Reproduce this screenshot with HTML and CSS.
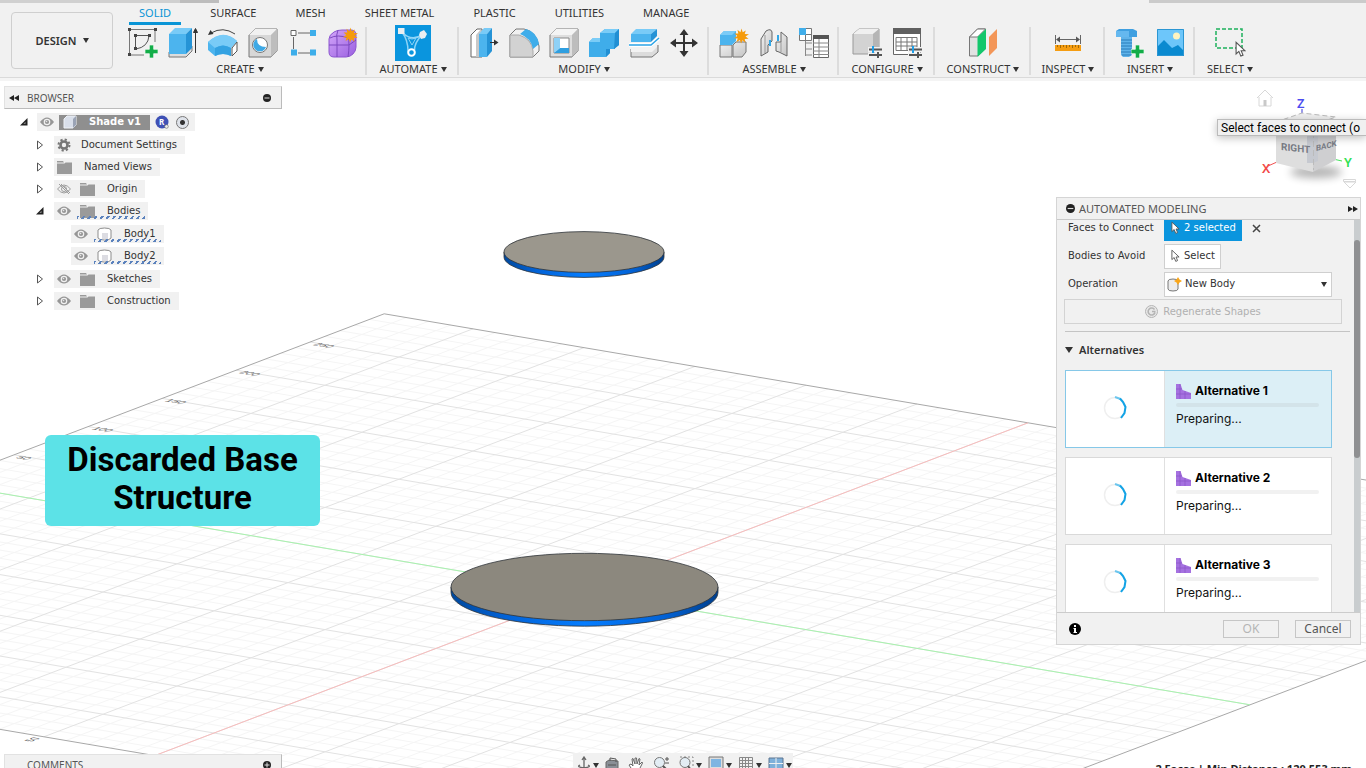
FILE: index.html
```html
<!DOCTYPE html>
<html lang="en">
<head>
<meta charset="utf-8">
<title>Shade v1</title>
<link rel="stylesheet" href="styles.css">
</head>
<body>
<svg class="defs" aria-hidden="true">
  <defs>
    <linearGradient id="steel" x1="0" y1="0" x2="1" y2="1"><stop offset="0" stop-color="#f4f4f4"/><stop offset="1" stop-color="#c4c4c4"/></linearGradient>
    <linearGradient id="rim"><stop offset="0" stop-color="#00489c"/><stop offset=".2" stop-color="#0262d6"/><stop offset=".5" stop-color="#057dff"/><stop offset=".8" stop-color="#0262d6"/><stop offset="1" stop-color="#003f8c"/></linearGradient>
    <linearGradient id="violet" x1="0" y1="0" x2="1" y2="1"><stop offset="0" stop-color="#d3a6fa"/><stop offset="1" stop-color="#9a5fe0"/></linearGradient>
    <symbol id="plus" viewBox="0 0 12 12"><path d="M4 0h4v4h4v4H8v4H4V8H0V4h4z" fill="#12ad48" stroke="#fff" stroke-width=".6"/></symbol>
    <symbol id="star" viewBox="0 0 16 16"><path d="M8 0l1.300 4.100L12.600 2l-1.200 3.800L16 6.200 12.300 8.600 15.500 11l-4.100.100.900 4L9 12.400 7.500 16 6.300 12.200 2.700 14.500 4 10.700 0 10.300 3.500 8 .600 5.200 4.600 5.200 3.700 1.300 6.900 3.900z" fill="#f59b0b"/></symbol>
    <symbol id="eye" viewBox="0 0 14 10"><path d="M0 5Q7-4 14 5Q7 14 0 5z" fill="#969696"/><circle cx="7" cy="5" r="3.300" fill="#f1f1f1"/><circle cx="7" cy="5" r="2.100" fill="#969696"/><circle cx="6.500" cy="4.500" r=".8" fill="#e4e4e4"/></symbol>
    <symbol id="eye-off" viewBox="0 0 14 10"><path d="M.5 5Q7-3 13.500 5Q7 13 .5 5zM2 0l10 10M4 0l9 9" fill="none" stroke="#9d9d9d"/><circle cx="7" cy="5" r="2.500" fill="none" stroke="#9d9d9d"/></symbol>
    <symbol id="folder" viewBox="0 0 15 13"><path d="M0 0h6l1 1.500H0zM0 2.500h7.500l1-1H15V13H0z" fill="#9a9a9a"/></symbol>
    <symbol id="body" viewBox="0 0 15 14"><path d="M1 3Q2 1 7.500 1T14 3v8q-1 2-6.500 2T1 11z" fill="#fff" stroke="#8d8d8d"/><path d="M5 6h6v6H5z" fill="#dcdce2"/></symbol>
    <symbol id="open" viewBox="0 0 8 8"><path d="M7.500 0v7.500H0z" fill="#222"/><path d="M5.500 4v1.800H3.500z" fill="#aaa"/></symbol>
    <symbol id="shut" viewBox="0 0 8 10"><path d="M1.500 1L6.500 5 1.500 9z" fill="#fff" stroke="#555"/></symbol>
    <symbol id="cursor" viewBox="0 0 10 15"><path d="M1 1v10.500l2.500-2.300L5.300 13.500l2-.9L5.600 8.600H9z" fill="#fff" stroke="#555"/></symbol>
    <symbol id="down" viewBox="0 0 6 5"><path d="M0 0h6L3 5z" fill="#333"/></symbol>
    <symbol id="shape" viewBox="0 0 15 15"><path d="M0 0h4.500l2 6 8.500 3v6H0z" fill="#a571e0"/><path d="M0 5h6M0 10h15M4 0v15M9 7v8" stroke="#8a55c6" stroke-width=".7"/></symbol>
    <symbol id="spinner" viewBox="0 0 24 26"><circle cx="12" cy="13" r="10.500" fill="none" stroke="#efefef" stroke-width="1.500"/><path d="M12 2l5.500 2" stroke="#6cc6ee" stroke-width="2" fill="none"/><path d="M17 3.500l3 3.500 2.500 5-1 6-3.500 5" stroke="#12a3e6" stroke-width="2" fill="none"/></symbol>
  </defs>
</svg>

<div class="app">
  <svg class="canvas" viewBox="0 0 1366 778" preserveAspectRatio="xMinYMin slice" aria-label="Model view">
    <g id="grid"></g>
    <g class="ruler">
      <text transform="matrix(.97 .17 -.8 .3 312 345)">250</text>
      <text transform="matrix(.97 .17 -.8 .3 238 373)">200</text>
      <text transform="matrix(.97 .17 -.8 .3 164 401)">150</text>
      <text transform="matrix(.97 .17 -.8 .3 91 429)">100</text>
      <text transform="matrix(.97 .17 -.8 .3 15 458)">50</text>
      <text transform="matrix(.8 -.3 .97 .17 31 742)">50</text>
    </g>
    <g stroke="#2f3338" stroke-width=".8">
      <path d="M504 252v5a80 20.400 0 0 0 160 0v-5z" fill="url(#rim)"/>
      <ellipse cx="584" cy="252" rx="80" ry="20.400" fill="#9b978d"/>
      <path d="M451 587v5.500a133.500 33.700 0 0 0 267 0V587z" fill="url(#rim)"/>
      <ellipse cx="584.500" cy="587" rx="133.500" ry="33.700" fill="#8c887e"/>
    </g>
  </svg>

  <header class="ribbon">
    <div class="strip"><i class="strip-a"></i><i class="strip-b"></i><i class="strip-c"></i><i class="strip-d"></i></div>
    <button class="design" type="button">DESIGN <svg width="6" height="5"><use href="#down"/></svg></button>
    <div class="tools">
      <nav class="tabs">
        <button type="button" class="tab active">SOLID</button>
        <button type="button" class="tab">SURFACE</button>
        <button type="button" class="tab">MESH</button>
        <button type="button" class="tab">SHEET METAL</button>
        <button type="button" class="tab">PLASTIC</button>
        <button type="button" class="tab">UTILITIES</button>
        <button type="button" class="tab">MANAGE</button>
      </nav>
      <div class="groups">
        <section class="group create">
          <div class="icons">
            <button type="button" aria-label="Sketch"><svg viewBox="0 0 32 32"><path d="M4 2.500h23M2.500 4v23M28 4v11M4 28h13" stroke="#777" fill="none"/><path d="M10 8.500h11M8.500 10v11M22 9q-1 11-13 13" stroke="#555" fill="none"/><path d="M1 1h3v3H1zM27 1h3v3h-3zM1 26h3v3H1zM7 7h3v3H7zM21 7h3v3h-3zM7 20h3v3H7z" fill="#444"/><use href="#plus" x="18" y="18" width="13" height="13"/></svg></button>
            <button type="button" aria-label="Extrude"><svg viewBox="0 0 32 32"><path d="M2 25v5h17l6-6v-5z" fill="#ddd" stroke="#777"/><path d="M2 7h17v20H2z" fill="#4cb4ee"/><path d="M2 7l6-6h17l-6 6z" fill="#79cbf7"/><path d="M19 7l6-6v20l-6 6z" fill="#2593d6"/><path d="M28.500 26V4M26.500 5.500l2-4 2 4z" stroke="#333" fill="#333"/></svg></button>
            <button type="button" aria-label="Revolve"><svg viewBox="0 0 32 32"><path d="M1 15v8l7 6q8-4 16 0v-8l6-7Q16 2 1 15z" fill="#4cb4ee"/><path d="M1 15Q16 1 30 14l-6 7q-8-5-16 0z" fill="#79cbf7"/><path d="M8 21q8-5 16 0v8q-8-4-16 0z" fill="#33a2e2"/><path d="M25 21l5-6v9l-5 5z" fill="#fff" stroke="#555"/><path d="M4 6Q16-1 28 7" fill="none" stroke="#444"/><path d="M1 8l2.500-5 3 4z" fill="#333"/></svg></button>
            <button type="button" aria-label="Hole"><svg viewBox="0 0 32 32"><path d="M2 8l6-6h22v22l-6 6H2z" fill="#d7d7d7" stroke="#777"/><path d="M2 8l6-6h22l-6 6z" fill="#f1f1f1"/><path d="M24 8l6-6v22l-6 6z" fill="#bdbdbd"/><circle cx="13" cy="18" r="7.500" fill="#fff" stroke="#777"/><path d="M10 12q0 8 9 8a6.500 6.500 0 1 1-9-8z" fill="#3fa9e5"/></svg></button>
            <button type="button" aria-label="Pattern"><svg viewBox="0 0 32 32"><path d="M11 6h12M6.500 10v12M11 26h12" stroke="#666"/><path d="M4 3.500h5v5H4z" fill="#fff" stroke="#666"/><path d="M23 3h6v6h-6zM4 22.500h6v6H4zM23 22.500h6v6h-6z" fill="#3daeea"/></svg></button>
            <button type="button" aria-label="Form"><svg viewBox="0 0 32 32"><path d="M2 12q0-4 5-7 3-2 8-2h9q5 0 5 5v12q0 4-3 7t-7 3H7q-5 0-5-5z" fill="url(#violet)" stroke="#8c57cf"/><path d="M11 3q-2 5-1 10v17M2 18h20l7-5M21 9q2 8 0 21M3 11q7-4 19 0l7-4" fill="none" stroke="#7c48bf"/><use href="#star" x="16" y="0" width="15" height="16"/></svg></button>
          </div>
          <button type="button" class="label">CREATE <svg width="6" height="5"><use href="#down"/></svg></button>
        </section>
        <section class="group automate">
          <div class="icons">
            <button type="button" class="on" aria-label="Automated Modeling"><svg viewBox="0 0 36 36"><path d="M7 7q9 10 20 3-8 8-7.500 16h-6.500q0-11-6-19z" fill="none" stroke="#8ed4f7" stroke-width="1.500"/><path d="M13 13q4 2 8 0l-4 7z" fill="none" stroke="#8ed4f7"/><path d="M3 3h6.500v6H3zM25 7l4-2 3 4-2 4-4 1-2-4z" fill="#e9eef1"/><circle cx="16.500" cy="27.500" r="3.300" fill="#0a95de" stroke="#fff" stroke-width="2"/></svg></button>
          </div>
          <button type="button" class="label">AUTOMATE <svg width="6" height="5"><use href="#down"/></svg></button>
        </section>
        <section class="group modify">
          <div class="icons">
            <button type="button" aria-label="Press Pull"><svg viewBox="0 0 32 32"><path d="M3 8l6-6h5v28H3z" fill="#fff" stroke="#666"/><path d="M8 8l5-6v28H8z" fill="#c8c8c8"/><path d="M11 7l5-6h8l-5 6z" fill="#79cbf7"/><path d="M11 7h8v23h-8z" fill="#4cb4ee"/><path d="M19 7l5-6v23l-5 6z" fill="#2593d6"/><path d="M22 15.500h6" stroke="#333"/><path d="M26 12.500l4.500 3-4.500 3z" fill="#333"/></svg></button>
            <button type="button" aria-label="Fillet"><svg viewBox="0 0 32 32"><path d="M2 8l6-6h8q12 2 15 17v5l-6 6H2z" fill="#f1f1f1" stroke="#777"/><path d="M2 8h9q13 4 14 16v6H2z" fill="#d2d2d2" stroke="#aaa"/><path d="M12 7l6-5q11 3 13 15l-6 5Q23 11 12 7z" fill="#3fadea"/></svg></button>
            <button type="button" aria-label="Shell"><svg viewBox="0 0 32 32"><path d="M2 8l6-6h22v22l-6 6H2z" fill="#dedede" stroke="#777"/><path d="M2 8l6-6h22l-6 6z" fill="#f4f4f4"/><path d="M24 8l6-6v22l-6 6z" fill="#bdbdbd"/><path d="M6 11h15v15H6z" fill="#fff" stroke="#888"/><path d="M6 11v15l6-5v-10z" fill="#8fd1f6"/><path d="M6 26l6-5h9v5z" fill="#2f9fe0"/></svg></button>
            <button type="button" aria-label="Combine"><svg viewBox="0 0 32 32"><path d="M1 15l4-4h7V6l5-4h14v16l-5 4h-4v4l-4 4H1z" fill="#3fadea"/><path d="M1 15l4-4h7V6l5-4h14l-4 4H12v9z" fill="#7accf7"/><path d="M12 6h15v16h-9v-7h-6z" fill="#3fadea"/><path d="M27 6l4-4v16l-5 4zM18 22h4v4l-4 4z" fill="#218fd3"/></svg></button>
            <button type="button" aria-label="Split"><svg viewBox="0 0 32 32"><path d="M3 22v8h21l6-5v-7" fill="#dcdcdc" stroke="#777"/><path d="M3 20h21l5-5v5l-5 5H3z" fill="#f2f2f2"/><path d="M3 7h20v8H3z" fill="#4cb4ee"/><path d="M3 7l5-5h21l-6 5z" fill="#79cbf7"/><path d="M23 7l6-5v7l-6 6z" fill="#2593d6"/><path d="M1 18h22l8-7" fill="none" stroke="#fff" stroke-width="4"/><path d="M1 18h22l8-7" fill="none" stroke="#2da4e6" stroke-width="1.500"/></svg></button>
            <button type="button" aria-label="Move"><svg viewBox="0 0 32 32"><path d="M16 5v22M5 16h22" stroke="#333" stroke-width="2"/><path d="M16 2l4.500 6h-9zM16 30l4.500-6h-9zM2 16l6-4.500v9zM30 16l-6-4.500v9z" fill="#333"/></svg></button>
          </div>
          <button type="button" class="label">MODIFY <svg width="6" height="5"><use href="#down"/></svg></button>
        </section>
        <section class="group assemble">
          <div class="icons">
            <button type="button" aria-label="New Component"><svg viewBox="0 0 32 32"><path d="M2 18h12v12H2zM15 18l3-3h10v10l-4 5H15z" fill="url(#steel)" stroke="#777"/><path d="M2 8l4-4h12v10l-4 4H2z" fill="#4cb4ee"/><path d="M2 8l4-4h12l-4 4z" fill="#7bcbf7"/><use href="#star" x="16" y="1" width="15" height="16"/></svg></button>
            <button type="button" aria-label="Joint"><svg viewBox="0 0 32 32"><path d="M3 12l5-8q5-3 6 1v9l-4 4v7l-7 4z" fill="url(#steel)" stroke="#666"/><path d="M29 10l-6-5v10h-5v9l3 1 8 4z" fill="url(#steel)" stroke="#666"/><path d="M7 8v18M23 15v10" stroke="#999"/><path d="M12 13v6M20 8v6" stroke="#32a8e8" stroke-width="2"/></svg></button>
            <button type="button" aria-label="Bill of Materials"><svg viewBox="0 0 32 32"><path d="M1.500 1.500h12v12h-12zM7.500 1.500v12M1.500 7.500h12" fill="#fff" stroke="#777"/><path d="M1 1h7v7H1z" fill="#41aeea"/><path d="M7.500 14v15M8 16h6M8 22h6M8 28h6" stroke="#888"/><path d="M15.500 9.500h15v21h-15z" fill="#fff" stroke="#666"/><path d="M15 8h16v4H15z" fill="#555"/><path d="M15 16h16M15 20h16M15 24h16M15 27.500h16M21 12v18" stroke="#888"/></svg></button>
          </div>
          <button type="button" class="label">ASSEMBLE <svg width="6" height="5"><use href="#down"/></svg></button>
        </section>
        <section class="group configure">
          <div class="icons">
            <button type="button" aria-label="Configure"><svg viewBox="0 0 32 32"><path d="M2 7l6-5h20v19l-6 6H2z" fill="#d3d3d3" stroke="#999"/><path d="M2 7l6-5h20l-6 5z" fill="#f0f0f0"/><path d="M22 7l6-5v19l-6 6z" fill="#b5b5b5"/><path d="M17 22.500h15M17 28h15" stroke="#f1f1f1" stroke-width="5"/><path d="M18 22.500h13M18 28h13" stroke="#555" stroke-width="2"/><path d="M22 19v7" stroke="#209fe8" stroke-width="2"/><path d="M27 25v6" stroke="#555" stroke-width="2"/></svg></button>
            <button type="button" aria-label="Configuration Table"><svg viewBox="0 0 32 32"><path d="M2.500 2.500h27v25h-27z" fill="#fff" stroke="#666"/><path d="M2 1h28v6H2z" fill="#606060"/><path d="M5 10.500h21v13H5zM5 15h21M5 19h21M10 10v14M16 10v14M21 10v14" fill="none" stroke="#777"/><path d="M17 22.500h15M17 28h15" stroke="#f1f1f1" stroke-width="5"/><path d="M18 22.500h13M18 28h13" stroke="#555" stroke-width="2"/><path d="M22 19v7" stroke="#209fe8" stroke-width="2"/><path d="M27 25v6" stroke="#555" stroke-width="2"/></svg></button>
          </div>
          <button type="button" class="label">CONFIGURE <svg width="6" height="5"><use href="#down"/></svg></button>
        </section>
        <section class="group construct">
          <div class="icons">
            <button type="button" aria-label="Offset Plane"><svg viewBox="0 0 32 32"><path d="M2.500 10l8-8h8v19l-8 8h-8z" fill="#e2e2e2" stroke="#777"/><path d="M2.500 10l8-8h8l-8 8z" fill="#fff" stroke="#777"/><path d="M10.500 10l8.500-8v20l-8.500 8z" fill="#14c76c"/><path d="M22 10l8-8v19l-8 8z" fill="#f39658"/></svg></button>
          </div>
          <button type="button" class="label">CONSTRUCT <svg width="6" height="5"><use href="#down"/></svg></button>
        </section>
        <section class="group inspect">
          <div class="icons">
            <button type="button" aria-label="Measure"><svg viewBox="0 0 32 32"><path d="M3.500 8v9M28.500 8v9M6 12.500h20" stroke="#666"/><path d="M4 12.500l4-3v6zM28 12.500l-4-3v6z" fill="#555"/><path d="M3 18h26v6H3z" fill="#f59d12"/><path d="M5.500 18v2M8.500 18v3M11.500 18v2M14.500 18v3M17.500 18v2M20.500 18v3M23.500 18v2M26.500 18v3" stroke="#a06a08"/></svg></button>
          </div>
          <button type="button" class="label">INSPECT <svg width="6" height="5"><use href="#down"/></svg></button>
        </section>
        <section class="group insert">
          <div class="icons">
            <button type="button" aria-label="Insert Fastener"><svg viewBox="0 0 32 32"><path d="M2 4l3-2h14l4 2v6H2z" fill="#3f9fe0"/><path d="M2 4h13v6H2z" fill="#65b8ef"/><path d="M7 10h11v18l-3 2H9l-2-2z" fill="#5fb3ea"/><path d="M7 13h11M7 16h11M7 19h11M7 22h11M7 25h11M8 28h9" stroke="#2b7dba"/><use href="#plus" x="17" y="18" width="13" height="13"/></svg></button>
            <button type="button" aria-label="Insert Image"><svg viewBox="0 0 32 32"><path d="M3 2h27v27H3z" fill="#6dc6fa"/><path d="M3 20l7-7 8 8 6-3 6 6v5H3z" fill="#0a8ad0"/><circle cx="22.500" cy="9" r="3.500" fill="#fff3c0"/><path d="M3.500 2.500h26v26h-26z" fill="none" stroke="#2b96d3"/></svg></button>
          </div>
          <button type="button" class="label">INSERT <svg width="6" height="5"><use href="#down"/></svg></button>
        </section>
        <section class="group select">
          <div class="icons">
            <button type="button" aria-label="Select"><svg viewBox="0 0 32 32"><path d="M2 2h26v19H2z" fill="none" stroke="#1eb15c" stroke-width="1.500" stroke-dasharray="4 2"/><use href="#cursor" x="21" y="14" width="11" height="17"/></svg></button>
          </div>
          <button type="button" class="label">SELECT <svg width="6" height="5"><use href="#down"/></svg></button>
        </section>
      </div>
    </div>
  </header>

  <main class="work">
    <aside class="left">
      <div class="bar">
        <svg width="10" height="6" viewBox="0 0 10 6"><path d="M5 0v6L0 3zM10 0v6L5 3z" fill="#222"/></svg>
        <span>BROWSER</span>
        <button type="button" aria-label="Collapse browser"><svg width="8" height="8" viewBox="0 0 8 8"><circle cx="4" cy="4" r="4" fill="#222"/><path d="M1.500 4h5" stroke="#ddd"/></svg></button>
      </div>
      <ul class="tree">
        <li>
          <div class="node"><svg class="tw" width="8" height="8"><use href="#open"/></svg>
            <div class="chip root"><svg width="14" height="10"><use href="#eye"/></svg>
              <span class="title"><svg width="14" height="14" viewBox="0 0 14 14"><path d="M1 4l3-3h9v9l-3 3H1z" fill="#d9dfea" stroke="#eef1f6"/><path d="M10 4l3-3v9l-3 3z" fill="#9aa3b5"/></svg>Shade v1</span>
              <svg width="14" height="14" viewBox="0 0 14 14"><circle cx="7" cy="7" r="6.500" fill="#3f51b5"/><text x="4" y="10" class="r">R</text><circle cx="11.500" cy="11.500" r="1.800" fill="#eee" stroke="#666" stroke-width=".6"/></svg>
              <input type="radio" checked aria-label="Activate Shade v1">
            </div></div>
          <ul>
            <li><div class="node"><svg class="tw" width="8" height="10"><use href="#shut"/></svg><div class="chip"><svg width="14" height="14" viewBox="0 0 14 14"><circle cx="7" cy="7" r="3.500" fill="none" stroke="#777" stroke-width="2.600"/><circle cx="7" cy="7" r="5.500" fill="none" stroke="#777" stroke-width="2" stroke-dasharray="2.200 2.120"/></svg><span class="t10">Document Settings</span></div></div></li>
            <li><div class="node"><svg class="tw" width="8" height="10"><use href="#shut"/></svg><div class="chip"><svg width="15" height="13"><use href="#folder"/></svg><span class="t12">Named Views</span></div></div></li>
            <li><div class="node"><svg class="tw" width="8" height="10"><use href="#shut"/></svg><div class="chip"><svg width="14" height="10"><use href="#eye-off"/></svg><svg class="second" width="15" height="13"><use href="#folder"/></svg><span class="t12">Origin</span></div></div></li>
            <li><div class="node"><svg class="tw" width="8" height="8"><use href="#open"/></svg><div class="chip marked"><svg width="14" height="10"><use href="#eye"/></svg><svg class="second" width="15" height="13"><use href="#folder"/></svg><span class="t12">Bodies</span></div></div>
              <ul class="leaves">
                <li><div class="node"><div class="chip marked"><svg width="14" height="10"><use href="#eye"/></svg><svg class="second" width="15" height="14"><use href="#body"/></svg><span class="t12">Body1</span></div></div></li>
                <li><div class="node"><div class="chip marked"><svg width="14" height="10"><use href="#eye"/></svg><svg class="second" width="15" height="14"><use href="#body"/></svg><span class="t12">Body2</span></div></div></li>
              </ul></li>
            <li><div class="node"><svg class="tw" width="8" height="10"><use href="#shut"/></svg><div class="chip"><svg width="14" height="10"><use href="#eye"/></svg><svg class="second" width="15" height="13"><use href="#folder"/></svg><span class="t12">Sketches</span></div></div></li>
            <li><div class="node"><svg class="tw" width="8" height="10"><use href="#shut"/></svg><div class="chip"><svg width="14" height="10"><use href="#eye"/></svg><svg class="second" width="15" height="13"><use href="#folder"/></svg><span class="t12">Construction</span></div></div></li>
          </ul>
        </li>
      </ul>
      <div class="bar comments">
        <span>COMMENTS</span>
        <button type="button" aria-label="Expand comments"><svg width="8" height="8" viewBox="0 0 8 8"><circle cx="4" cy="4" r="4" fill="#222"/><path d="M1.500 4h5M4 1.500v5" stroke="#ddd"/></svg></button>
      </div>
    </aside>

    <div class="middle">
      <div class="nav">
        <button type="button" aria-label="Orbit"><svg width="14" height="16" viewBox="0 0 14 16"><path d="M7 1v12M5 4l2-3 2 3M3 9q-4 2 4 3 8-1 4-3" fill="none" stroke="#666" stroke-width="1.300"/></svg></button>
        <svg class="caret" width="6" height="5"><use href="#down"/></svg>
        <button type="button" aria-label="Look At"><svg width="14" height="16" viewBox="0 0 14 16"><path d="M1 6l3-2 9 1v9H1z" fill="#8a8f96" stroke="#666"/><path d="M5 5V2l6 1v3M3 9h8" fill="none" stroke="#555"/></svg></button>
        <button type="button" aria-label="Pan"><svg width="16" height="16" viewBox="0 0 16 16"><path d="M5 15L1 9l2-1 2 2-1-7 1-.5L7 8V2h1.500L9 8l2-5.500 1 .5-1 6 3-3 .5 1-4 8z" fill="#fff" stroke="#666"/></svg></button>
        <button type="button" aria-label="Zoom"><svg width="16" height="16" viewBox="0 0 16 16"><circle cx="6.500" cy="6.500" r="5" fill="#e3edf4" stroke="#777"/><path d="M10 10l4 4" stroke="#555" stroke-width="2"/><path d="M12 3h4M14 1v4M12 7h4" stroke="#555"/></svg></button>
        <button type="button" aria-label="Fit"><svg width="16" height="16" viewBox="0 0 16 16"><path d="M2 1h13v13" fill="none" stroke="#888" stroke-dasharray="2 2"/><circle cx="7" cy="6.500" r="5" fill="#e3edf4" stroke="#777"/><path d="M10 10l3 4" stroke="#555" stroke-width="2"/></svg></button>
        <svg class="caret" width="6" height="5"><use href="#down"/></svg>
        <button type="button" aria-label="Display Settings"><svg width="16" height="16" viewBox="0 0 16 16"><path d="M1 1h14v12H1z" fill="#ddd" stroke="#777"/><path d="M3 3h10v8H3z" fill="#7fb5e2"/></svg></button>
        <svg class="caret" width="6" height="5"><use href="#down"/></svg>
        <button type="button" aria-label="Grid and Snaps"><svg width="16" height="16" viewBox="0 0 16 16"><path d="M1.500 1.500h13v13h-13zM4.500 1v14M7.500 1v14M10.500 1v14M1 4.500h14M1 7.500h14M1 10.500h14" fill="none" stroke="#888"/></svg></button>
        <svg class="caret" width="6" height="5"><use href="#down"/></svg>
        <button type="button" aria-label="Viewports"><svg width="16" height="16" viewBox="0 0 16 16"><path d="M1 2h14v12H1z" fill="#7fb0da" stroke="#5c7590"/><path d="M8 2v12M1 7.500h14" stroke="#f1f1f1"/></svg></button>
        <svg class="caret" width="6" height="5"><use href="#down"/></svg>
      </div>
    </div>

    <aside class="right">
      <svg class="viewcube" width="110" height="113" viewBox="0 0 110 113" aria-label="View cube">
        <g fill="none" stroke="#d8d8d8"><path d="M1 14l8-8 8 8M3 13v9h12v-9"/><path d="M87.500 97.500v-2h12v2zM88 98h12l-6 6z"/></g>
        <path d="M7.500 16h3v6h-3z" fill="#c9c9c9"/>
        <ellipse cx="60" cy="88" rx="26" ry="6" fill="#000" opacity=".3" class="soft"/>
        <path d="M46 25v10" stroke="#3535d8"/><path d="M12 82l9-4" stroke="#f05050"/><path d="M77 75l9 2" stroke="#42e35c"/>
        <path d="M20 38l26-9 34 4-23 8z" fill="#efefef" stroke="#bbb" stroke-dasharray="5 3"/>
        <path d="M20 40l37 7v41l-37-9z" fill="#dedede"/><path d="M57 47l23-8v37l-23 12z" fill="#cfcfd1"/>
        <path d="M51 46h6v33h-6zM57 46l5-2v33l-5 2z" fill="#c6c9d0"/><path d="M57.500 48v38" stroke="#bbb" stroke-dasharray="6 3"/>
        <text class="face" transform="translate(25 66) skewY(6)">RIGHT</text>
        <text class="face side" transform="translate(60 67) skewY(-14)">BACK</text>
        <text x="41" y="24" class="axis" fill="#4c4cf0">Z</text>
        <text x="6" y="89" class="axis" fill="#f24848">X</text>
        <text x="88" y="83" class="axis" fill="#2fe052">Y</text>
      </svg>
      <section class="dialog">
        <header class="dialog-head">
          <svg width="9" height="9" viewBox="0 0 8 8"><circle cx="4" cy="4" r="4" fill="#222"/><path d="M1.500 4h5" stroke="#ddd"/></svg>
          <h2>AUTOMATED MODELING</h2>
          <svg width="10" height="6" viewBox="0 0 10 6"><path d="M0 0v6l5-3zM5 0v6l5-3z" fill="#222"/></svg>
        </header>
        <div class="dialog-body">
          <div class="scroll">
            <div class="form">
              <div class="row"><label for="faces">Faces to Connect</label><button id="faces" type="button" class="pick chosen"><svg width="9" height="14"><use href="#cursor"/></svg>2 selected</button><button type="button" class="clear" aria-label="Clear selection"><svg width="9" height="9" viewBox="0 0 9 9"><path d="M1 1l7 7M8 1L1 8" stroke="#444" stroke-width="1.500"/></svg></button></div>
              <div class="row"><label for="avoid">Bodies to Avoid</label><button id="avoid" type="button" class="pick"><svg width="9" height="14"><use href="#cursor"/></svg>Select</button></div>
              <div class="row"><label for="op">Operation</label>
                <div class="drop"><select id="op"><option>New Body</option></select>
                  <svg class="drop-icon" width="15" height="15" viewBox="0 0 15 15"><path d="M1 4q0-2 5-2t5 2v8q0 2-5 2t-5-2z" fill="#ececec" stroke="#777"/><path d="M11 0l1.500 2.500L15 4l-2.500 1.500L11 8 9.500 5.500 7 4l2.500-1.500z" fill="#f9a61a"/></svg>
                  <svg class="drop-caret" width="6" height="5"><use href="#down"/></svg></div>
              </div>
              <button type="button" class="regen" disabled><svg width="13" height="13" viewBox="0 0 13 13"><circle cx="6.500" cy="6.500" r="6" fill="#e8e8e8" stroke="#b4b4b4"/><path d="M9.500 4.500a3.500 3.500 0 1 0 .5 3M7 6.500h3.500" fill="none" stroke="#b4b4b4" stroke-width="1.600"/></svg>Regenerate Shapes</button>
            </div>
            <h3><svg width="8" height="6" viewBox="0 0 6 5" preserveAspectRatio="none"><path d="M0 0h6L3 5z" fill="#333"/></svg>Alternatives</h3>
            <div class="cards">
              <article class="card current"><div class="thumb"><svg width="24" height="26"><use href="#spinner"/></svg></div><div class="info"><h4><svg width="15" height="15"><use href="#shape"/></svg>Alternative 1</h4><div class="meter"></div><p>Preparing...</p></div></article>
              <article class="card"><div class="thumb"><svg width="24" height="26"><use href="#spinner"/></svg></div><div class="info"><h4><svg width="15" height="15"><use href="#shape"/></svg>Alternative 2</h4><div class="meter"></div><p>Preparing...</p></div></article>
              <article class="card"><div class="thumb"><svg width="24" height="26"><use href="#spinner"/></svg></div><div class="info"><h4><svg width="15" height="15"><use href="#shape"/></svg>Alternative 3</h4><div class="meter"></div><p>Preparing...</p></div></article>
            </div>
          </div>
          <div class="track"><div class="thumb-bar"></div></div>
        </div>
        <footer class="dialog-foot">
          <svg width="12" height="12" viewBox="0 0 12 12"><circle cx="6" cy="6" r="6" fill="#000"/><path d="M5 2h2v2H5zM4.500 5H7v4h1v1H4.500V9H5V6h-.5z" fill="#fff"/></svg>
          <button type="button" disabled>OK</button><button type="button">Cancel</button>
        </footer>
      </section>
      <p class="status">2 Faces | Min Distance : 120.553 mm</p>
    </aside>
  </main>

  <div class="tip" role="tooltip">Select faces to connect (o</div>
  <div class="sticker">Discarded Base Structure</div>
</div>
<script src="grid.js"></script>
</body>
</html>
```
FILE: styles.css
```css
* { box-sizing: border-box; }
body { margin: 0; overflow: hidden; background: #fff; color: #333; font: 11px/16px "Noto Sans", "Open Sans", sans-serif; }
button { font: inherit; color: inherit; background: none; border: 0; padding: 0; margin: 0; }
ul { list-style: none; margin: 0; padding: 0; }
h2, h3, h4, p { margin: 0; font-size: inherit; }
svg { display: block; flex: none; }
.defs { position: absolute; width: 0; height: 0; }

/* The lower bars run past the bottom edge of the window. */
.app { position: relative; display: flex; flex-direction: column; height: calc(100vh + 10px); overflow: hidden; }
.canvas { position: absolute; inset: 0; width: 100%; height: 100%; }
.canvas .minor { stroke: #f5f5f5; fill: none; }
.canvas .major { stroke: #e2e2e2; fill: none; }
.canvas .edge { stroke: #a8a8a8; fill: none; }
.canvas .red { stroke: #f8bcbc; }
.canvas .green { stroke: #a8f3ae; }
.ruler { font: 11px "Liberation Sans", sans-serif; fill: #555; }

/* Ribbon */
.ribbon { position: relative; display: flex; flex: none; height: 81px; padding: 3px 0 2px 11px; background: #f1f1f1; border-bottom: 1px solid #f4f4f4; box-shadow: inset 0 -2px 0 #f4f4f4, inset 0 -3px 0 #dadada; }
.strip { position: absolute; inset: 0 0 auto; height: 3px; display: flex; }
.strip-a { width: 180px; background: #d0d0d0; }
.strip-b { width: 39px; background: #bdbdbd; }
.strip-c { flex: 1; }
.strip-d { width: 217px; background: #cbcbcb; }
.design { width: 102px; height: 57px; margin-top: 9px; flex: none; display: flex; align-items: center; justify-content: center; gap: 6px; border: 1px solid #cfcfcf; border-radius: 4px; font-weight: 600; }
.tools { flex: 1; min-width: 0; }
.tabs { display: flex; gap: 19px; padding-left: 16px; height: 22px; }
.tab { padding: 2px 10px 1px; height: 22px; line-height: 16px; border-bottom: 3px solid transparent; white-space: nowrap; }
.tab.active { color: #0a95d6; border-color: #0a95d6; }
.groups { display: flex; height: 52px; }
.group { position: relative; flex: none; display: flex; flex-direction: column; align-items: center; }
.group::after { content: ""; position: absolute; right: 0; top: 2px; bottom: 2px; width: 2px; background: #dcdcdc; }
.create { width: 254px; }
.create .icons { padding-left: 5px; }
.automate { width: 92px; }
.modify { width: 250px; }
.assemble { width: 130px; }
.configure, .construct { width: 96px; }
.inspect { width: 74px; }
.insert { width: 90px; }
.select { width: 70px; }
.select::after { display: none; }
.icons { display: flex; height: 36px; align-items: center; }
.icons button { width: 40px; display: flex; justify-content: center; }
.icons svg { width: 32px; height: 32px; }
.icons .on { width: 36px; background: #0a95de; }
.icons .on svg { width: 36px; height: 36px; }
.label { display: flex; align-items: center; gap: 3px; height: 16px; white-space: nowrap; }

/* Browser */
.work { position: relative; flex: 1; min-height: 0; display: flex; }
.left { width: 282px; padding: 5px 0 0 4px; display: flex; flex-direction: column; }
.bar { display: flex; align-items: center; height: 23px; padding: 0 10px 0 4px; background: #f1f1f1; border: 1px solid #e2e2e2; border-right-color: #bbb; border-bottom-color: #bbb; font-size: 10px; color: #555; }
.bar span { flex: 1; margin-left: 8px; }
.comments { height: 24px; margin-top: auto; padding: 0 10px 3px 14px; }
.tree { padding-top: 2px; color: #333; font-family: "DejaVu Sans", sans-serif; font-size: 10px; }
.tree ul { padding: 1px 0 0; }
.tree .leaves { padding: 1px 0; }
.node { display: flex; align-items: center; height: 22px; padding-left: 32px; }
.tree > li > .node { padding-left: 16px; }
.leaves .node { padding-left: 67px; }
.tw { margin-right: 10px; }
.tree > li > .node > .tw { margin-right: 9px; }
.chip { position: relative; display: flex; align-items: center; height: 18px; padding: 0 8px 0 3px; background: #f1f1f1; white-space: nowrap; }
.second { margin-left: 9px; }
.t10 { margin-left: 10px; }
.t12 { margin-left: 12px; }
.marked::after { content: ""; position: absolute; left: 23px; right: 3px; bottom: 1px; height: 3px; background: repeating-linear-gradient(125deg, #5b82bd 0 2px, transparent 2px 5px); }
.root { gap: 5px; padding-right: 6px; }
.title { display: flex; align-items: center; gap: 12px; height: 15px; padding: 0 9px 0 4px; background: #8f8f8f; color: #fff; font-weight: 700; }
.r { font: bold 8px "Noto Sans", sans-serif; fill: #fff; }
.root input { appearance: none; width: 13px; height: 13px; margin: 0 0 0 2px; border: 1px solid #777; border-radius: 50%; background: radial-gradient(circle, #333 0 2px, #dfe3ea 3px); }

/* Navigation bar */
.middle { flex: 1; display: flex; align-items: flex-end; justify-content: flex-end; padding-right: 263px; min-width: 0; }
.nav { display: flex; align-items: center; height: 25px; width: 220px; padding: 0 0 3px 4px; background: #f1f1f1; }
.nav button + button { margin-left: 9px; }
.nav .caret { margin: 2px 6px 0 2px; }

/* Right side */
.right { width: 310px; padding: 3px 0 0; display: flex; flex-direction: column; }
.viewcube { align-self: flex-end; }
.soft { filter: blur(4px); }
.face { font: bold 10px Roboto, sans-serif; fill: #777b84; }
.face.side { font-size: 8px; }
.axis { font: 600 13px "Noto Sans", sans-serif; }
.dialog { display: flex; flex-direction: column; margin-right: 5px; background: #f1f1f1; border: 1px solid #d5d5d5; }
.dialog-head { display: flex; align-items: center; gap: 4px; height: 22px; padding: 0 2px 0 9px; border-bottom: 1px solid #c9c9c9; color: #555; }
.dialog-head h2 { flex: 1; font-weight: 400; }
.dialog-body { display: flex; height: 393px; border-bottom: 1px solid #ccc; font-family: "DejaVu Sans", sans-serif; font-size: 10px; }
.scroll { flex: 1; overflow: hidden; padding-left: 8px; }
.form { display: flex; flex-direction: column; padding-bottom: 7px; margin: -6px 4px 0 0; border-bottom: 1px solid #c4c4c4; }
.row { display: flex; align-items: center; height: 28px; }
.row label { width: 99px; padding-left: 3px; white-space: nowrap; }
.pick { display: flex; align-items: center; gap: 4px; height: 25px; padding: 0 5px 0 6px; background: #fff; border: 1px solid #cfcfcf; }
.pick.chosen { background: #0a95de; border-color: #0a95de; color: #fff; }
.clear { margin-left: 10px; }
.drop { position: relative; width: 168px; }
.drop select { appearance: none; width: 100%; height: 25px; padding: 0 20px; border: 1px solid #cfcfcf; border-radius: 0; background: #fff; font: inherit; color: inherit; }
.drop-icon { position: absolute; left: 3px; top: 5px; }
.drop-caret { position: absolute; right: 5px; top: 10px; }
.regen { display: flex; align-items: center; justify-content: center; gap: 5px; height: 25px; margin: 1px 8px 0 -1px; border: 1px solid #d3d3d3; color: #b0b0b0; }
h3 { display: flex; align-items: center; gap: 6px; height: 38px; padding-bottom: 3px; font-family: "Noto Sans", sans-serif; font-size: 11px; font-weight: 600; }
.cards { display: flex; flex-direction: column; gap: 9px; width: 267px; }
.card { display: flex; flex: none; height: 78px; background: #fff; border: 1px solid #d9d9d9; color: #111; font-family: Inter, sans-serif; font-size: 12px; }
.thumb { width: 99px; padding-bottom: 3px; display: flex; align-items: center; justify-content: center; border-right: 1px solid #e0e0e0; }
.info { flex: 1; padding: 12px 12px 0 11px; }
.current { border-color: #86c8e8; }
.current .info { background: #dceff6; }
.card h4 { display: flex; align-items: center; gap: 4px; height: 16px; font-weight: 700; color: #000; }
.meter { height: 4px; margin-top: 4px; border-radius: 2px; background: #f1f1f1; }
.current .meter { background: #d3e3e9; }
.card p { margin-top: 4px; line-height: 16px; }
.track { width: 6px; padding-top: 20px; background: #c9cdcf; }
.thumb-bar { height: 218px; border-radius: 3px; background: #8f9092; }
.dialog-foot { display: flex; align-items: center; gap: 16px; height: 31px; padding: 0 9px 0 12px; font-size: 12px; color: #555; }
.dialog-foot svg { margin-right: auto; }
.dialog-foot button { width: 56px; height: 18px; line-height: 16px; border: 1px solid #c6c6c6; }
.dialog-foot button:disabled { color: #b5b5b5; }
.status { margin-top: auto; padding: 0 14px 1px 0; text-align: right; font-weight: 700; color: #222; }

/* Overlays */
.tip { position: absolute; left: 1217px; right: 0; top: 119px; height: 17px; padding-left: 3px; overflow: hidden; white-space: nowrap; background: #f0f0f0; border: 1px solid #bbb; border-right: 0; box-shadow: 0 2px 8px rgba(0,0,0,.25); color: #000; font: 12px/16px Roboto, sans-serif; }
.sticker { position: absolute; left: 45px; top: 435px; width: 275px; height: 91px; padding: 6px 12px; border-radius: 6px; background: #5ce2e7; color: #000; text-align: center; font: bold 33px/38px Roboto, sans-serif; }
```
FILE: grid.js
```js
// Ground plane: each unit is one major cell, drawn with a parallel projection.
(function () {
  var U = [111, 18.8], V = [74, -28.2], O = [584, 592];
  var MIN = -5.8, MAX = 6;

  function point(a, b) {
    return (O[0] + a * U[0] + b * V[0]).toFixed(1) + ' ' + (O[1] + a * U[1] + b * V[1]).toFixed(1);
  }
  function line(a1, b1, a2, b2) {
    return 'M' + point(a1, b1) + 'L' + point(a2, b2);
  }
  function add(name, d) {
    var path = document.createElementNS('http://www.w3.org/2000/svg', 'path');
    path.setAttribute('class', name);
    path.setAttribute('d', d);
    document.getElementById('grid').appendChild(path);
  }

  var minor = '', major = '';
  for (var i = -28; i < 30; i++) {
    var t = i / 5;
    var both = line(t, MIN, t, MAX) + line(MIN, t, MAX, t);
    if (i % 5) minor += both; else major += both;
  }
  add('minor', minor);
  add('major', major);
  add('edge', line(MIN, MAX, MAX, MAX) + line(MIN, MIN, MIN, MAX) + line(MIN, MIN, MAX, MIN) + line(MAX, MIN, MAX, MAX));
  add('red', line(0, MIN, 0, MAX));
  add('green', line(MIN, 0, MAX, 0));
})();
```
